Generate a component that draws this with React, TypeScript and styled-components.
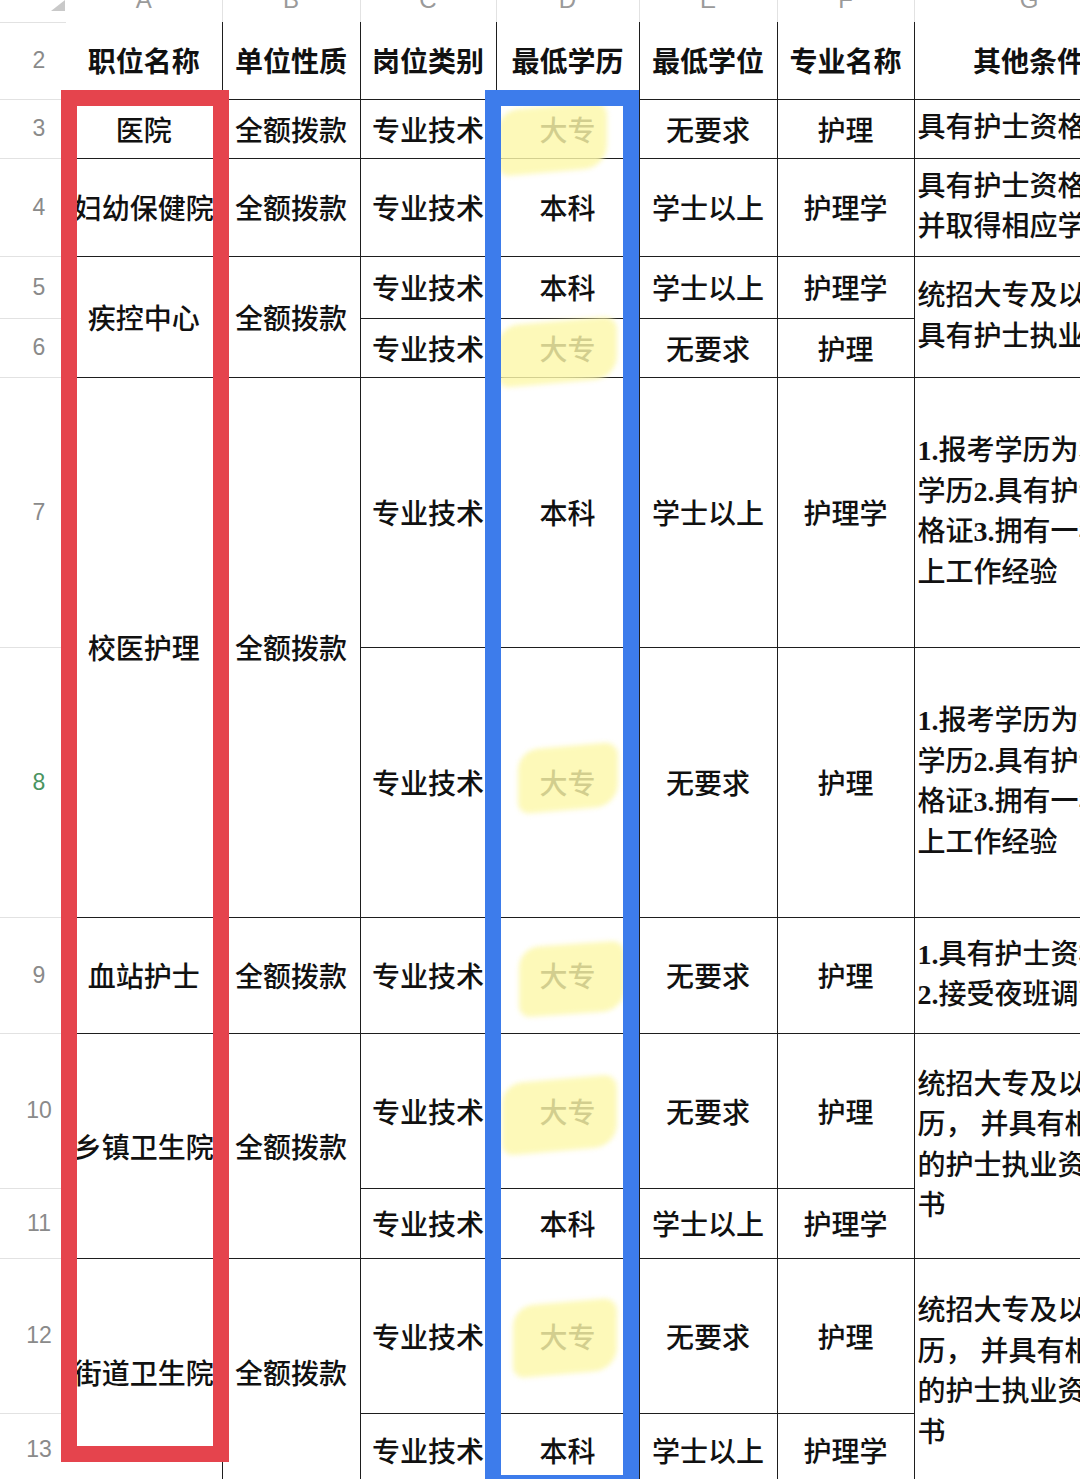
import React from 'react';
import styled, { createGlobalStyle } from 'styled-components';

const GlobalStyle = createGlobalStyle`
  html, body {
    margin: 0;
    background: #fff;
    overflow: hidden;
  }
`;

const Sheet = styled.div`
  position: relative;
  width: 1080px;
  height: 1479px;
  overflow: hidden;
  background: #fff;
  font-family: "Noto Sans CJK SC", "Noto Sans", sans-serif;
`;

const Grid = styled.table`
  border-collapse: collapse;
  table-layout: fixed;
  width: 1144px;
`;

const Row = styled.tr<{ $h: number }>`
  height: ${(p) => p.$h}px;
`;

const Corner = styled.td`
  padding: 0;
  vertical-align: top;
  line-height: 0;
  border-bottom: 1px solid #e2e2e2;
  svg {
    display: block;
    margin-left: auto;
    margin-right: 1px;
  }
`;

const Letter = styled.td`
  padding: 0;
  vertical-align: top;
  text-align: center;
  border-right: 1px solid #e2e2e2;
  font-family: "Liberation Sans", Arial, sans-serif;
  font-size: 24px;
  line-height: 0;
  color: #9a9a9a;
`;

const RowNum = styled.td<{ $active?: boolean }>`
  padding: 0 0 0 12px;
  text-align: center;
  border-bottom: 1px solid #e2e2e2;
  font-family: "Liberation Sans", Arial, sans-serif;
  font-size: 23px;
  color: ${(p) => (p.$active ? '#4a9460' : '#8a8a8a')};

  & + td {
    border-left: none;
  }
`;

const Cell = styled.td<{ $head?: boolean; $top?: boolean }>`
  padding: 0;
  border: 1px solid #1e1e1e;
  border-top: ${(p) => (p.$top ? 'none' : '1px solid #1e1e1e')};
  text-align: center;
  white-space: nowrap;
  font-size: 28px;
  font-weight: ${(p) => (p.$head ? 700 : 500)};
  color: #111;
`;

const MarkedCell = styled(Cell)`
  position: relative;
`;

const Note = styled(Cell)`
  text-align: left;
  padding-left: 3px;
  line-height: 40.5px;
  font-family: "Liberation Serif", "Noto Sans CJK SC", serif;
  overflow: hidden;
`;

const NoteLine = styled.div`
  white-space: nowrap;
`;

const Num = styled.span`
  font-weight: 700;
`;

const Mark = styled.span<{ $x: number; $y: number; $w: number; $h: number; $tilt: number }>`
  position: absolute;
  left: ${(p) => p.$x}px;
  top: ${(p) => p.$y}px;
  width: ${(p) => p.$w}px;
  height: ${(p) => p.$h}px;
  background: rgba(252, 248, 170, 0.82);
  border-radius: 20px 14px 22px 12px;
  transform: skewY(${(p) => p.$tilt}deg);
  filter: blur(2.5px);
  pointer-events: none;
`;

const Frame = styled.div<{ $color: string; $left: number; $top: number; $w: number; $h: number }>`
  position: absolute;
  left: ${(p) => p.$left}px;
  top: ${(p) => p.$top}px;
  width: ${(p) => p.$w}px;
  height: ${(p) => p.$h}px;
  box-sizing: border-box;
  border: 16px solid ${(p) => p.$color};
  z-index: 2;
  pointer-events: none;
`;

type MarkPos = { x: number; y: number; w: number; h: number; tilt: number };

const Dazhuan = ({ m }: { m: MarkPos }) => (
  <MarkedCell>
    大专
    <Mark $x={m.x} $y={m.y} $w={m.w} $h={m.h} $tilt={m.tilt} />
  </MarkedCell>
);

const Lines = ({ lines, rowSpan }: { lines: React.ReactNode[]; rowSpan?: number }) => (
  <Note rowSpan={rowSpan}>
    {lines.map((l, i) => (
      <NoteLine key={i}>{l}</NoteLine>
    ))}
  </Note>
);

const schoolNote = (level: string) => [
  <><Num>1.</Num>报考学历为{level}</>,
  <>学历<Num>2.</Num>具有护士资</>,
  <>格证<Num>3.</Num>拥有一年以</>,
  <>上工作经验</>,
];

const townNote = ['统招大专及以上学', '历， 并具有相应', '的护士执业资格证', '书'];

const letters = ['A', 'B', 'C', 'D', 'E', 'F', 'G'];

const App = () => (
  <Sheet>
    <GlobalStyle />
    <Grid>
      <colgroup>
        <col style={{ width: 66 }} />
        <col style={{ width: 156 }} />
        <col style={{ width: 138 }} />
        <col style={{ width: 136 }} />
        <col style={{ width: 143 }} />
        <col style={{ width: 138 }} />
        <col style={{ width: 137 }} />
        <col style={{ width: 230 }} />
      </colgroup>
      <tbody>
        <Row $h={22}>
          <Corner>
            <svg width="14" height="11" viewBox="0 0 14 11">
              <polygon points="0,11 14,11 14,0" fill="#c9c9c9" />
            </svg>
          </Corner>
          {letters.map((l) => (
            <Letter key={l}>{l}</Letter>
          ))}
        </Row>
        <Row $h={77}>
          <RowNum>2</RowNum>
          <Cell $head $top>职位名称</Cell>
          <Cell $head $top>单位性质</Cell>
          <Cell $head $top>岗位类别</Cell>
          <Cell $head $top>最低学历</Cell>
          <Cell $head $top>最低学位</Cell>
          <Cell $head $top>专业名称</Cell>
          <Cell $head $top>其他条件</Cell>
        </Row>
        <Row $h={59}>
          <RowNum>3</RowNum>
          <Cell>医院</Cell>
          <Cell>全额拨款</Cell>
          <Cell>专业技术</Cell>
          <Dazhuan m={{ x: 1, y: 6, w: 109, h: 66, tilt: -5 }} />
          <Cell>无要求</Cell>
          <Cell>护理</Cell>
          <Lines lines={['具有护士资格证']} />
        </Row>
        <Row $h={98}>
          <RowNum>4</RowNum>
          <Cell>妇幼保健院</Cell>
          <Cell>全额拨款</Cell>
          <Cell>专业技术</Cell>
          <Cell>本科</Cell>
          <Cell>学士以上</Cell>
          <Cell>护理学</Cell>
          <Lines lines={['具有护士资格证', '并取得相应学位']} />
        </Row>
        <Row $h={62}>
          <RowNum>5</RowNum>
          <Cell rowSpan={2}>疾控中心</Cell>
          <Cell rowSpan={2}>全额拨款</Cell>
          <Cell>专业技术</Cell>
          <Cell>本科</Cell>
          <Cell>学士以上</Cell>
          <Cell>护理学</Cell>
          <Lines rowSpan={2} lines={['统招大专及以上学', '具有护士执业资格']} />
        </Row>
        <Row $h={59}>
          <RowNum>6</RowNum>
          <Cell>专业技术</Cell>
          <Dazhuan m={{ x: 1, y: 2, w: 119, h: 62, tilt: -5 }} />
          <Cell>无要求</Cell>
          <Cell>护理</Cell>
        </Row>
        <Row $h={270}>
          <RowNum>7</RowNum>
          <Cell rowSpan={2}>校医护理</Cell>
          <Cell rowSpan={2}>全额拨款</Cell>
          <Cell>专业技术</Cell>
          <Cell>本科</Cell>
          <Cell>学士以上</Cell>
          <Cell>护理学</Cell>
          <Lines lines={schoolNote('本科')} />
        </Row>
        <Row $h={270}>
          <RowNum $active>8</RowNum>
          <Cell>专业技术</Cell>
          <Dazhuan m={{ x: 21, y: 98, w: 100, h: 64, tilt: -5 }} />
          <Cell>无要求</Cell>
          <Cell>护理</Cell>
          <Lines lines={schoolNote('大专')} />
        </Row>
        <Row $h={116}>
          <RowNum>9</RowNum>
          <Cell>血站护士</Cell>
          <Cell>全额拨款</Cell>
          <Cell>专业技术</Cell>
          <Dazhuan m={{ x: 22, y: 26, w: 106, h: 70, tilt: -4 }} />
          <Cell>无要求</Cell>
          <Cell>护理</Cell>
          <Lines lines={[<><Num>1.</Num>具有护士资格证</>, <><Num>2.</Num>接受夜班调配</>]} />
        </Row>
        <Row $h={155}>
          <RowNum>10</RowNum>
          <Cell rowSpan={2}>乡镇卫生院</Cell>
          <Cell rowSpan={2}>全额拨款</Cell>
          <Cell>专业技术</Cell>
          <Dazhuan m={{ x: 5, y: 45, w: 115, h: 72, tilt: -5 }} />
          <Cell>无要求</Cell>
          <Cell>护理</Cell>
          <Lines rowSpan={2} lines={townNote} />
        </Row>
        <Row $h={70}>
          <RowNum>11</RowNum>
          <Cell>专业技术</Cell>
          <Cell>本科</Cell>
          <Cell>学士以上</Cell>
          <Cell>护理学</Cell>
        </Row>
        <Row $h={155}>
          <RowNum>12</RowNum>
          <Cell rowSpan={2}>街道卫生院</Cell>
          <Cell rowSpan={2}>全额拨款</Cell>
          <Cell>专业技术</Cell>
          <Dazhuan m={{ x: 16, y: 43, w: 104, h: 72, tilt: -5 }} />
          <Cell>无要求</Cell>
          <Cell>护理</Cell>
          <Lines rowSpan={2} lines={townNote} />
        </Row>
        <Row $h={73}>
          <RowNum>13</RowNum>
          <Cell>专业技术</Cell>
          <Cell>本科</Cell>
          <Cell>学士以上</Cell>
          <Cell>护理学</Cell>
        </Row>
      </tbody>
    </Grid>
    <Frame $color="#e5444d" $left={61} $top={90} $w={168} $h={1372} />
    <Frame $color="#3d7ceb" $left={485} $top={90} $w={154} $h={1401} />
  </Sheet>
);

export default App;
